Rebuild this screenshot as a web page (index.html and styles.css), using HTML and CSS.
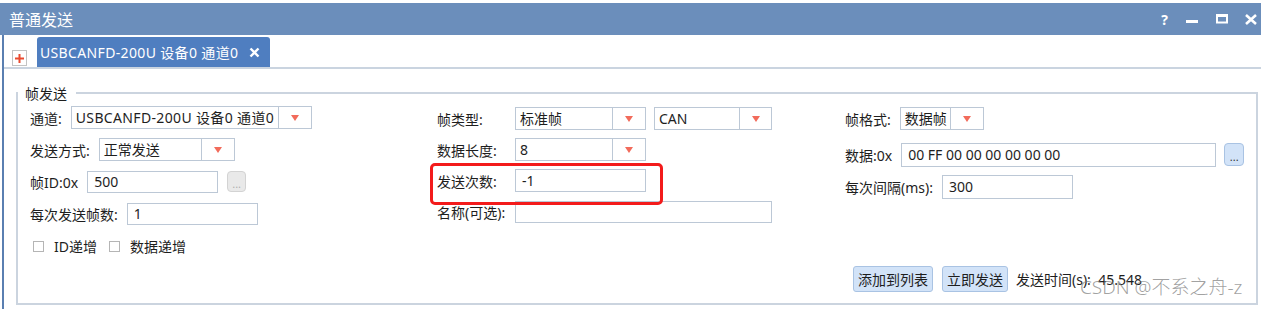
FILE: index.html
```html
<!DOCTYPE html>
<html lang="zh-CN">
<head>
    <meta charset="UTF-8">
    <title>普通发送</title>
    <link rel="stylesheet" href="styles.css">
</head>
<body>

    <div class="window">
        <header class="titlebar">
            <span class="title">普通发送</span>
            <div class="win-buttons">
                <span class="help">?</span>
                <svg width="13" height="10" viewBox="0 0 13 10"><rect x="0" y="6" width="12" height="3" fill="#fff"/></svg>
                <svg width="12" height="10" viewBox="0 0 12 10"><rect x="1" y="1.5" width="10" height="7" fill="none" stroke="#fff" stroke-width="2"/><rect x="0" y="0" width="12" height="3" fill="#fff"/></svg>
                <svg width="12" height="11" viewBox="0 0 12 11"><path d="M1 1 L11 10 M11 1 L1 10" stroke="#fff" stroke-width="2.6"/></svg>
            </div>
        </header>

        <div class="main">
            <div class="tabstrip">
                <span class="add-tab">
                    <svg width="11" height="11" viewBox="0 0 11 11"><path d="M5.5 1 V10 M1 5.5 H10" stroke="#ea4a2f" stroke-width="2"/></svg>
                </span>
                <div class="tab">
                    <span>USBCANFD-200U 设备0 通道0</span>
                    <svg width="11" height="11" viewBox="0 0 11 11"><path d="M1.5 1.5 L9.5 9.5 M9.5 1.5 L1.5 9.5" stroke="#fff" stroke-width="2.4"/></svg>
                </div>
            </div>

            <fieldset class="group">
                <legend>帧发送</legend>
                <div class="grid">
                    <!-- left column -->
                    <div class="col">
                        <div class="row">
                            <label>通道:</label>
                            <div class="combo w241"><span class="value">USBCANFD-200U 设备0 通道0</span><span class="arrow"></span></div>
                        </div>
                        <div class="row">
                            <label>发送方式:</label>
                            <div class="combo w136"><span class="value">正常发送</span><span class="arrow"></span></div>
                        </div>
                        <div class="row">
                            <label>帧ID:0x</label>
                            <div class="field w131 h22">500</div>
                            <button class="dots disabled">...</button>
                        </div>
                        <div class="row">
                            <label>每次发送帧数:</label>
                            <div class="field w131 h22">1</div>
                        </div>
                        <div class="row checks">
                            <span class="check"></span><span class="check-text">ID递增</span>
                            <span class="check"></span><span class="check-text">数据递增</span>
                        </div>
                    </div>

                    <!-- middle column -->
                    <div class="col mid">
                        <div class="row">
                            <label class="fixed">帧类型:</label>
                            <div class="combo w131"><span class="value">标准帧</span><span class="arrow"></span></div>
                            <div class="combo w118 ml8"><span class="value">CAN</span><span class="arrow narrow"></span></div>
                        </div>
                        <div class="row">
                            <label class="fixed">数据长度:</label>
                            <div class="combo w131"><span class="value">8</span><span class="arrow"></span></div>
                        </div>
                        <div class="row">
                            <label class="fixed">发送次数:</label>
                            <div class="field w131">-1</div>
                        </div>
                        <div class="row">
                            <label class="fixed">名称(可选):</label>
                            <div class="field w257 h22"></div>
                        </div>
                    </div>

                    <!-- right column -->
                    <div class="col right">
                        <div class="row">
                            <label>帧格式:</label>
                            <div class="combo w84"><span class="value">数据帧</span><span class="arrow"></span></div>
                        </div>
                        <div class="row data-row">
                            <label>数据:0x</label>
                            <div class="field w315 h24">00 FF 00 00 00 00 00 00</div>
                            <button class="dots">...</button>
                        </div>
                        <div class="row">
                            <label>每次间隔(ms):</label>
                            <div class="field w131 h24">300</div>
                        </div>
                    </div>

                    <div class="actions">
                        <button class="btn">添加到列表</button>
                        <button class="btn">立即发送</button>
                        <span class="send-time">发送时间(s):&nbsp; 45.548</span>
                    </div>
                </div>
            </fieldset>
        </div>
    </div>

    <div class="highlight"></div>
    <div class="watermark">CSDN @不系之舟-z</div>

</body>
</html>
```

FILE: styles.css
```css
* {
    margin: 0;
    padding: 0;
    box-sizing: border-box;
}

body {
    position: relative;
    width: 1261px;
    height: 309px;
    overflow: hidden;
    background: #fff;
    font-family: "Noto Sans", "Noto Sans CJK SC", sans-serif;
    font-size: 14px;
    color: #1e1e1e;
}

.window {
    margin-top: 3px;
}

.titlebar {
    height: 32px;
    background: #6b8ebb;
    display: flex;
    align-items: center;
    justify-content: space-between;
    padding: 0 4px 0 9px;
    color: #fff;
}

.titlebar .title {
    font-size: 16px;
    font-family: "Noto Sans CJK SC", sans-serif;
}

.win-buttons {
    display: flex;
    align-items: center;
    gap: 17px;
}

.win-buttons .help {
    font-weight: bold;
    font-size: 14px;
    margin-right: 1px;
}

.main {
    margin-left: 2px;
    border-left: 2px solid #5a7fb1;
    height: 274px;
}

.tabstrip {
    height: 34px;
    border-bottom: 2px solid #cad4e0;
    display: flex;
    align-items: flex-end;
}

.add-tab {
    width: 15px;
    height: 16px;
    margin: 0 0 1px 8px;
    border: 1px solid #c3c3c3;
    background: #fff;
    display: flex;
    align-items: center;
    justify-content: center;
}

.tab {
    height: 30px;
    width: 233px;
    margin-left: 10px;
    background: #4f7ec0;
    border-radius: 3px 3px 0 0;
    color: #fff;
    display: flex;
    align-items: center;
    padding-left: 3px;
    gap: 11px;
}

.tab span {
    letter-spacing: 0.35px;
}

.group {
    margin: 14px 3px 0 12px;
    border: 2px solid #cbd4df;
    padding: 3px 0 11px 12px;
    height: 222px;
}

.group legend {
    margin-left: -12px;
    padding: 0 9px 0 7px;
    line-height: 20px;
    font-family: "Noto Sans CJK SC", sans-serif;
}

.grid {
    display: grid;
    grid-template-columns: 407px 408px 1fr;
    row-gap: 9px;
}

.col {
    display: flex;
    flex-direction: column;
    gap: 9px;
}

.col.mid {
    margin-top: 1px;
    gap: 8px;
}

.col.right {
    margin-top: 1px;
}

.col.right .data-row {
    margin-top: 4px;
}

.row {
    display: flex;
    align-items: center;
    height: 23px;
}

.row label {
    margin-right: 9px;
    white-space: nowrap;
}

.row label.fixed {
    width: 78px;
    margin-right: 0;
}

.combo {
    height: 23px;
    border: 1px solid #bcc8d6;
    background: #fff;
    display: flex;
}

.combo .value {
    flex: 1;
    padding-left: 4px;
    line-height: 21px;
    white-space: nowrap;
    overflow: hidden;
    border-right: 1px solid #bcc8d6;
}

.w241 .value {
    letter-spacing: 0.35px;
}

.combo .arrow {
    width: 32px;
    display: flex;
    align-items: center;
    justify-content: center;
}

.combo .arrow::after {
    content: "";
    border-left: 4px solid transparent;
    border-right: 4px solid transparent;
    border-top: 6px solid #f26b5b;
}

.combo .arrow.narrow {
    width: 31px;
}

.field {
    height: 23px;
    border: 1px solid #bcc8d6;
    background: #fff;
    padding-left: 6px;
    line-height: 21px;
    white-space: nowrap;
}

.h22 { height: 22px; line-height: 20px; }
.h24 { height: 24px; line-height: 22px; }

.w84 { width: 84px; }
.w118 { width: 118px; }
.w131 { width: 131px; }
.w136 { width: 136px; }
.w241 { width: 241px; }
.w257 { width: 257px; }
.w315 { width: 315px; }
.ml8 { margin-left: 8px; }

.dots {
    width: 20px;
    height: 23px;
    margin-left: 8px;
    border: 1px solid #a9c3e3;
    border-radius: 4px;
    background: #d2e3f8;
    font-family: "Noto Sans", sans-serif;
    font-size: 11px;
    color: #333;
    line-height: 14px;
    padding-top: 4px;
}

.dots.disabled {
    width: 19px;
    height: 21px;
    margin-left: 9px;
    border-color: #d3d3d3;
    background: #e9e9e9;
    color: #b0b0b0;
}

.checks {
    margin-top: 1px;
    height: 22px;
}

.check {
    width: 11px;
    height: 11px;
    border: 1px solid #b5b5b5;
    margin-left: 3px;
}

.check-text {
    margin-left: 10px;
    margin-right: 9px;
}

.actions {
    grid-column: 3;
    display: flex;
    align-items: center;
    padding-left: 8px;
    height: 26px;
}

.btn {
    height: 26px;
    padding: 0 4px;
    border: 1px solid #a9c3e3;
    border-radius: 3px;
    background: #d2e3f8;
    font-family: "Noto Sans CJK SC", sans-serif;
    font-size: 14px;
    color: #1e1e1e;
    margin-right: 9px;
}

.send-time {
    margin-left: -1px;
}

.highlight {
    position: absolute;
    left: 430px;
    top: 163px;
    width: 233px;
    height: 42px;
    border: 3px solid #f31b1b;
    border-radius: 5px;
}

.watermark {
    position: absolute;
    left: 1080px;
    top: 276px;
    font-size: 19px;
    line-height: 22px;
    font-family: "Noto Sans", "Noto Sans CJK SC", sans-serif;
    font-weight: 300;
    color: rgba(120, 120, 120, 0.7);
    white-space: nowrap;
}
```
